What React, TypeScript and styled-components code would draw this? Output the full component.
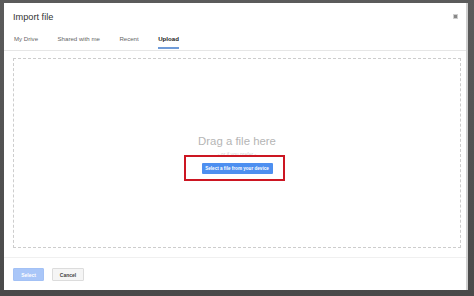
import { FC } from 'react';
import styled, { createGlobalStyle } from 'styled-components';

const GlobalStyle = createGlobalStyle`
  html, body {
    margin: 0;
    padding: 0;
    background: #4f4f4f;
  }
  body {
    font-family: 'Liberation Sans', Arial, sans-serif;
  }
`;

const tabs = ['My Drive', 'Shared with me', 'Recent', 'Upload'];

const App: FC = () => {
  return (
    <>
      <GlobalStyle />
      <Page>
        <Dialog>
          <Header>
            <Title>Import file</Title>
            <Close aria-label="close" />
          </Header>
          <TabBar>
            {tabs.map((t) => (
              <Tab key={t} $active={t === 'Upload'}>
                {t}
              </Tab>
            ))}
          </TabBar>
          <Body>
            <DropZone>
              <DragText>Drag a file here</DragText>
              <OrText>- or if you prefer -</OrText>
              <ButtonWrap>
                <DeviceButton>Select a file from your device</DeviceButton>
                <Highlight />
              </ButtonWrap>
            </DropZone>
          </Body>
          <Footer>
            <PrimaryButton disabled>Select</PrimaryButton>
            <Button>Cancel</Button>
          </Footer>
        </Dialog>
      </Page>
    </>
  );
};

export default App;

const Page = styled.div`
  width: 474px;
  height: 296px;
  box-sizing: border-box;
  padding: 3px 6px 6px 4px;
  background: linear-gradient(#5b5b5b, #4a4a4a);
`;

const Dialog = styled.div`
  width: 462px;
  height: 287px;
  background: #fff;
  box-shadow: 2px 0 0 #cfcfcf;
  display: flex;
  flex-direction: column;
`;

const Header = styled.div`
  height: 26px;
  display: flex;
  align-items: center;
  justify-content: space-between;
  padding: 0 6px 0 9px;
`;

const Title = styled.div`
  font-size: 9.2px;
  color: #333;
  padding-top: 1px;
`;

const Close = styled.span`
  display: block;
  width: 3px;
  height: 3px;
  background: #888;
  border: 1px solid #cfcfcf;
  margin-right: 2px;
`;

const TabBar = styled.div`
  height: 21px;
  display: flex;
  align-items: stretch;
  gap: 19.5px;
  padding-left: 10px;
  border-bottom: 1px solid #e6e6e6;
`;

const Tab = styled.div<{ $active?: boolean }>`
  display: flex;
  align-items: center;
  font-size: 6.1px;
  color: ${(p) => (p.$active ? '#222' : '#666')};
  font-weight: ${(p) => (p.$active ? 700 : 400)};
  border-bottom: 2px solid ${(p) => (p.$active ? '#6f9bd8' : 'transparent')};
  box-sizing: border-box;
  padding-top: 1px;
  margin-bottom: 1px;
`;

const Body = styled.div`
  padding: 7px 5px 0 9px;
`;

const DropZone = styled.div`
  height: 190px;
  box-sizing: border-box;
  border: 1px dashed #cdcdcd;
  display: flex;
  flex-direction: column;
  align-items: center;
  padding-top: 75px;
`;

const DragText = styled.div`
  font-size: 11.4px;
  color: #b5b5b5;
  line-height: 15px;
`;

const OrText = styled.div`
  font-size: 5px;
  color: #d2d2d2;
  line-height: 8px;
  margin-top: 1px;
`;

const ButtonWrap = styled.div`
  position: relative;
  margin-top: 5px;
`;

const DeviceButton = styled.button`
  display: block;
  width: 71px;
  height: 11px;
  padding: 0;
  border: none;
  background: #4d8ff0;
  color: #fff;
  font-family: inherit;
  font-weight: 700;
  font-size: 4.6px;
  border-radius: 1px;
`;

const Highlight = styled.div`
  position: absolute;
  top: -8px;
  bottom: -7px;
  left: -18px;
  right: -12px;
  border: 2px solid #cc1622;
`;

const Footer = styled.div`
  margin-top: 9px;
  border-top: 1px solid #f0f0f0;
  display: flex;
  gap: 8px;
  padding: 10px 0 0 9px;
`;

const Button = styled.button`
  height: 13px;
  width: 32px;
  padding: 0;
  font-family: inherit;
  font-size: 5px;
  font-weight: 700;
  color: #444;
  background: #f5f5f5;
  border: 1px solid #dcdcdc;
  border-radius: 1px;
`;

const PrimaryButton = styled(Button)`
  width: 31px;
  color: #fff;
  background: #a9c6f8;
  border-color: #a3c1f5;
`;
